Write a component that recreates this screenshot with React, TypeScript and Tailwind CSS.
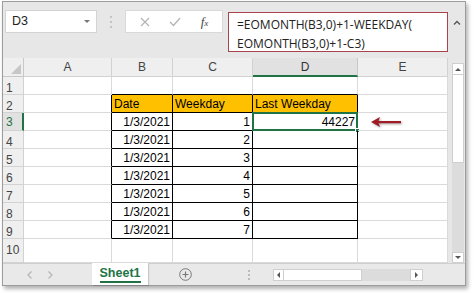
import { Fragment } from 'react';

const cellFont = { fontFamily: '"Liberation Sans", Arial, sans-serif' };

const colWidths = ['A', 'B', 'C', 'D', 'E'];

type Cell = { text?: string; align?: 'left' | 'right'; yellow?: boolean };

function rowCells(r: number): Cell[] {
  if (r === 2) {
    return [
      {},
      { text: 'Date', align: 'left', yellow: true },
      { text: 'Weekday', align: 'left', yellow: true },
      { text: 'Last Weekday', align: 'left', yellow: true },
      {},
    ];
  }
  if (r >= 3 && r <= 9) {
    return [
      {},
      { text: '1/3/2021', align: 'right' },
      { text: String(r - 2), align: 'right' },
      { text: r === 3 ? '44227' : '', align: 'right' },
      {},
    ];
  }
  return [{}, {}, {}, {}, {}];
}

function inTable(r: number, c: number) {
  return r >= 2 && r <= 9 && c >= 1 && c <= 3;
}

function LeftArrow() {
  return (
    <svg width="32" height="12" viewBox="0 0 32 12" className="drop-shadow-[1px_1px_1px_rgba(0,0,0,0.35)]">
      <path d="M1 6 L10 1 L8.5 5 L31 5 L31 7.2 L8.5 7.2 L10 11 Z" fill="#9e1b24" />
    </svg>
  );
}

export default function App() {
  const rows = [1, 2, 3, 4, 5, 6, 7, 8, 9, 10];

  return (
    <div className="w-[474px] h-[295px] bg-white overflow-hidden">
      <div className="ml-[2px] mt-[1px] w-[464px] h-[285px] border border-[#9c9c9c] bg-[#e7e7e7] shadow-[2px_3px_4px_rgba(0,0,0,0.3)] flex flex-col">
        {/* Formula bar */}
        <div className="h-[56px] flex items-start pt-[8px] pl-[2px] shrink-0">
          <div className="w-[92px] h-[23px] bg-white border border-[#d4d4d4] flex items-center justify-between pl-[6px] pr-[6px] text-[12.5px] text-[#222]" style={cellFont}>
            <span>D3</span>
            <span className="w-0 h-0 border-l-[3px] border-r-[3px] border-t-[3px] border-l-transparent border-r-transparent border-t-[#777]" />
          </div>
          <div className="w-[28px] h-[23px] flex flex-col items-center justify-center gap-[3px]">
            <span className="w-[2px] h-[2px] bg-[#c4c4c4]" />
            <span className="w-[2px] h-[2px] bg-[#c4c4c4]" />
            <span className="w-[2px] h-[2px] bg-[#c4c4c4]" />
          </div>
          <div className="w-[98px] h-[23px] bg-white border border-[#d9d9d9] flex items-center justify-around px-[4px]">
            <svg width="10" height="10" viewBox="0 0 10 10"><path d="M1 1 L9 9 M9 1 L1 9" stroke="#b4b4b4" strokeWidth="1.2" /></svg>
            <svg width="12" height="10" viewBox="0 0 12 10"><path d="M1 5 L4.5 8.5 L11 1" stroke="#b4b4b4" strokeWidth="1.3" fill="none" /></svg>
            <span className="text-[13px] italic text-[#444]" style={{ fontFamily: '"Liberation Serif", serif' }}>f<span className="text-[9px]">x</span></span>
          </div>
          <div className="ml-[5px] mt-[2px] w-[220px] h-[40px] bg-white border border-[#a8434d] px-[8px] pt-[2px] text-[12px] leading-[19px] text-[#222]" style={{ fontFamily: '"Open Sans", "Liberation Sans", sans-serif' }}>
            <div>=EOMONTH(B3,0)+1-WEEKDAY(</div>
            <div>EOMONTH(B3,0)+1-C3)</div>
          </div>
          <div className="ml-[5px] mt-[10px] w-[8px]">
            <svg width="8" height="5" viewBox="0 0 8 5"><path d="M1 4.5 L4 1.5 L7 4.5" stroke="#555" strokeWidth="1.3" fill="none" /></svg>
          </div>
        </div>

        {/* Grid + vertical scrollbar */}
        <div className="flex h-[205px] shrink-0">
          <div className="grid grid-cols-[21px_88px_61px_80px_105px_90px] grid-rows-[19px_repeat(9,18px)_1fr] bg-white text-[12px] text-black w-[445px]" style={cellFont}>
            {/* header row */}
            <div className="bg-[#efefef] border-r border-b border-[#c8c8c8] relative">
              <span className="absolute right-[2px] bottom-[2px] w-0 h-0" style={{ borderBottom: '10px solid #c6c6c6', borderLeft: '10px solid transparent' }} />
            </div>
            {colWidths.map((c) => (
              <div
                key={c}
                className={
                  c === 'D'
                    ? 'bg-[#e1e1e1] border-r border-[#c8c8c8] border-b-2 border-b-[#217346] flex items-center justify-center text-[#333]'
                    : 'bg-[#efefef] border-r border-b border-[#d2d2d2] flex items-center justify-center text-[#444]'
                }
              >
                {c}
              </div>
            ))}

            {rows.map((r) => (
              <Fragment key={r}>
                <div
                  className={
                    r === 3
                      ? 'bg-[#e1e1e1] border-b border-[#d2d2d2] border-r-2 border-r-[#217346] flex items-center pl-[3px] text-[#217346]'
                      : 'bg-[#efefef] border-r border-b border-[#d2d2d2] flex items-start pt-[2px] pl-[3px] text-[#444]'
                  }
                >
                  {r}
                </div>
                {rowCells(r).map((cell, ci) => {
                  const black = inTable(r, ci);
                  const rightBlack = black || (ci === 0 && r >= 2 && r <= 9);
                  const bottomBlack = black || (r === 1 && ci >= 1 && ci <= 3);
                  return (
                    <div
                      key={ci}
                      className={[
                        'relative flex items-center px-[2px] border-r border-b whitespace-nowrap',
                        rightBlack ? 'border-r-black' : 'border-r-[#dadada]',
                        bottomBlack ? 'border-b-black' : 'border-b-[#dadada]',
                        cell.align === 'right' ? 'justify-end' : 'justify-start',
                        cell.yellow ? 'bg-[#ffc000]' : '',
                        r === 10 ? 'items-start pt-[1px]' : '',
                      ].join(' ')}
                    >
                      {cell.text}
                      {r === 3 && ci === 3 && (
                        <span className="absolute -left-[1px] -top-[1px] -right-[1px] -bottom-[1px] border-2 border-[#217346]">
                          <span className="absolute -right-[4px] -bottom-[4px] w-[5px] h-[5px] bg-[#217346] border border-white" />
                        </span>
                      )}
                      {r === 3 && ci === 4 && (
                        <span className="ml-[10px]">
                          <LeftArrow />
                        </span>
                      )}
                    </div>
                  );
                })}
              </Fragment>
            ))}
          </div>

          <div className="w-[4px]" />
          <div className="w-[12px] flex flex-col pt-[5px]">
            <div className="h-[12px] bg-white border border-[#cfcfcf] flex items-center justify-center">
              <span className="w-0 h-0 border-l-[3px] border-r-[3px] border-b-[3px] border-l-transparent border-r-transparent border-b-[#555]" />
            </div>
            <div className="h-[88px] bg-white border-x border-b border-[#cfcfcf]" />
            <div className="flex-1 bg-[#dcdcdc]" />
            <div className="h-[11px] bg-white border border-[#cfcfcf] flex items-center justify-center">
              <span className="w-0 h-0 border-l-[3px] border-r-[3px] border-t-[3px] border-l-transparent border-r-transparent border-t-[#555]" />
            </div>
          </div>
        </div>

        {/* Sheet tabs + horizontal scrollbar */}
        <div className="flex-1 flex items-stretch border-t border-[#cfcfcf] bg-[#e9e9e9]">
          <div className="w-[89px] flex items-center pl-[24px] gap-[16px] text-[#b5b5b5]">
            <svg width="5" height="8" viewBox="0 0 5 8"><path d="M4.5 0.5 L1 4 L4.5 7.5" stroke="#b5b5b5" strokeWidth="1.2" fill="none" /></svg>
            <svg width="5" height="8" viewBox="0 0 5 8"><path d="M0.5 0.5 L4 4 L0.5 7.5" stroke="#b5b5b5" strokeWidth="1.2" fill="none" /></svg>
          </div>
          <div className="w-[56px] bg-white flex items-center justify-center -mt-[1px] shadow-[1px_1px_1px_rgba(0,0,0,0.15)]">
            <span className="text-[12.5px] font-bold text-[#217346] border-b-2 border-[#217346] leading-[15px]" style={cellFont}>Sheet1</span>
          </div>
          <div className="w-[77px] flex items-center pl-[31px]">
            <svg width="13" height="13" viewBox="0 0 13 13">
              <circle cx="6.5" cy="6.5" r="5.8" stroke="#777" strokeWidth="1" fill="none" />
              <path d="M6.5 3.5 V9.5 M3.5 6.5 H9.5" stroke="#777" strokeWidth="1.2" />
            </svg>
          </div>
          <div className="w-[48px] flex flex-col items-center justify-center gap-[2px]">
            <span className="w-[2px] h-[2px] bg-[#bbb]" />
            <span className="w-[2px] h-[2px] bg-[#bbb]" />
            <span className="w-[2px] h-[2px] bg-[#bbb]" />
          </div>
          <div className="flex items-center h-full">
            <div className="flex h-[12px] w-[150px]">
              <div className="w-[11px] bg-white border border-[#cfcfcf] flex items-center justify-center">
                <span className="w-0 h-0 border-t-[3px] border-b-[3px] border-r-[3px] border-t-transparent border-b-transparent border-r-[#555]" />
              </div>
              <div className="w-[78px] bg-white border-y border-r border-[#cfcfcf]" />
              <div className="flex-1 bg-[#dcdcdc]" />
              <div className="w-[13px] bg-white border border-[#cfcfcf] flex items-center justify-center">
                <span className="w-0 h-0 border-t-[3px] border-b-[3px] border-l-[3px] border-t-transparent border-b-transparent border-l-[#555]" />
              </div>
            </div>
          </div>
        </div>
      </div>
    </div>
  );
}
